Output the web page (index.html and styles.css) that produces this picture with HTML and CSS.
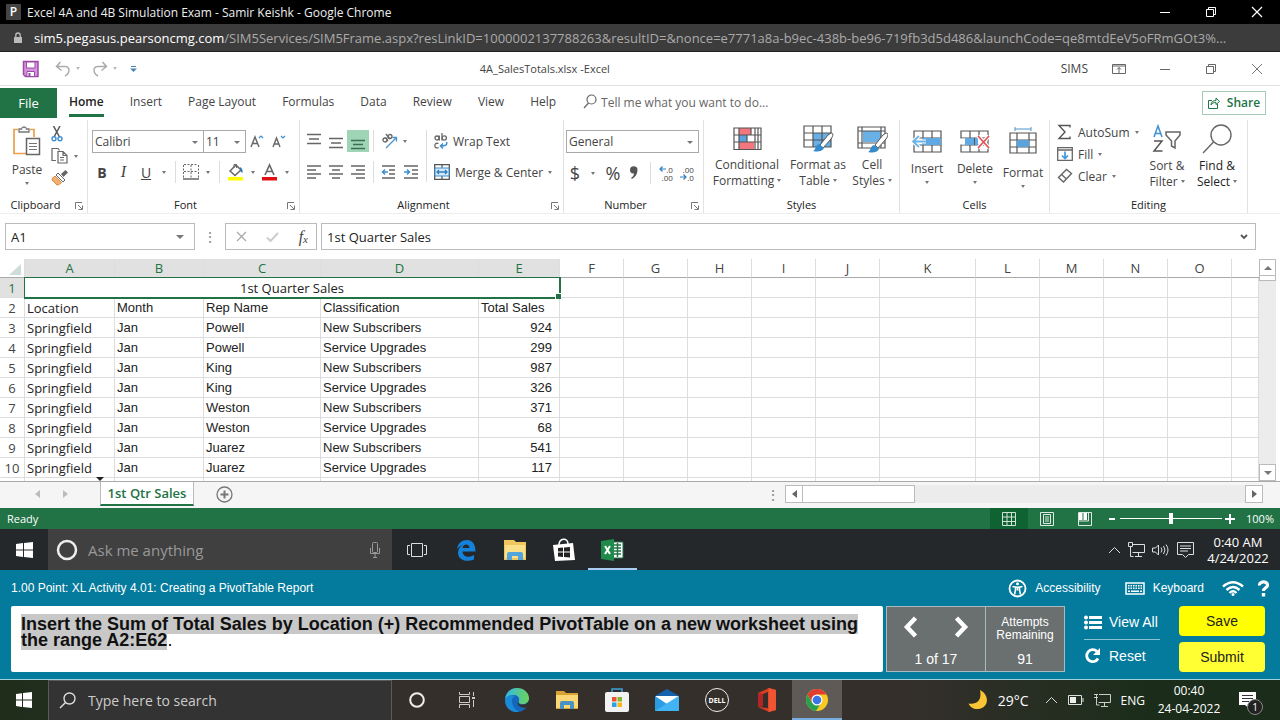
FILE: index.html
```html
<!DOCTYPE html>
<html lang="en">
<head>
<meta charset="utf-8">
<title>Excel 4A and 4B Simulation Exam</title>
<link rel="stylesheet" href="styles.css">
</head>
<body>
<header class="titlebar">
  <span class="favicon">P</span>
  <span class="window-title">Excel 4A and 4B Simulation Exam - Samir Keishk - Google Chrome</span>
  <button class="winbtn" aria-label="Minimize"><svg width="12" height="12"><path d="M1 6.500h10" stroke="#fff" fill="none"/></svg></button>
  <button class="winbtn" aria-label="Restore"><svg width="12" height="12" fill="none" stroke="#fff"><path d="M1.500 3.500h7v7h-7zM3.500 3.500v-2h7v7h-2"/></svg></button>
  <button class="winbtn" aria-label="Close"><svg width="12" height="12" stroke="#fff" stroke-width="1.200"><path d="M1 1l10 10M11 1L1 11"/></svg></button>
</header>
<div class="urlbar">
  <svg width="8" height="12" viewBox="0 0 8 12"><path d="M0 5h8v6H0z" fill="#bbb"/><path d="M1.800 5V3.200a2.200 2.200 0 014.400 0V5" fill="none" stroke="#bbb" stroke-width="1.300"/></svg>
  <span class="url"><b>sim5.pegasus.pearsoncmg.com</b>/SIM5Services/SIM5Frame.aspx?resLinkID=1000002137788263&amp;resultID=&amp;nonce=e7771a8a-b9ec-438b-be96-719fb3d5d486&amp;launchCode=qe8mtdEeV5oFRmGOt3%...</span>
</div>

<div class="qat">
  <button aria-label="Save file"><svg width="18" height="18" viewBox="0 0 18 18"><path d="M1.500 1.500h14.500v15H3.500l-2-2z" fill="#d494dc" stroke="#9b4aa6" stroke-width="1.500"/><path d="M4.500 2h8.500v6H4.500z" fill="#fff" stroke="#9b4aa6"/><path d="M5 11.500h7.500v5H5z" fill="#fff" stroke="#9b4aa6"/><path d="M6.500 13h2v3.500h-2z" fill="#9b4aa6"/></svg></button>
  <button class="undo" aria-label="Undo"><svg width="16" height="16" fill="none" stroke="#aaa" stroke-width="1.500"><path d="M5.500 1L1.500 5.500l5 4M1.500 5.500H10c3.500 0 5 3 3.500 6-.6 1.400-2 2.700-3.500 3.500"/></svg><i class="caret pale"></i></button>
  <button class="redo" aria-label="Redo"><svg width="16" height="16" fill="none" stroke="#aaa" stroke-width="1.500"><path d="M10.500 1l4 4.500-5 4M14.500 5.500H6c-3.500 0-5 3-3.500 6 .6 1.400 2 2.700 3.500 3.500"/></svg><i class="caret pale"></i></button>
  <button class="more" aria-label="Customize"><svg width="7" height="8"><path d="M1 1.500h5" stroke="#4a83b5"/><path d="M0 3.500h7L3.500 7z" fill="#4a83b5"/></svg></button>
  <span class="doc-title">4A_SalesTotals.xlsx -Excel</span>
  <span class="sims">SIMS</span>
  <button class="appbtn" aria-label="Ribbon options"><svg width="14" height="12" fill="none" stroke="#666"><path d="M.500 1.500h13v9H.500zM.500 3h13M7 10V4.500M5 6.500l2-2 2 2"/></svg></button>
  <button class="appbtn" aria-label="Minimize"><svg width="12" height="12"><path d="M1 6.500h10" stroke="#666"/></svg></button>
  <button class="appbtn" aria-label="Restore"><svg width="12" height="12" fill="none" stroke="#666"><path d="M1.500 3.500h7v7h-7zM3.500 3.500v-2h7v7h-2"/></svg></button>
  <button class="appbtn" aria-label="Close"><svg width="12" height="12" stroke="#777"><path d="M1 1l10 10M11 1L1 11"/></svg></button>
</div>

<nav class="tabs">
  <button class="file">File</button>
  <div class="tablist">
    <button class="active">Home</button><button>Insert</button><button>Page Layout</button><button>Formulas</button><button>Data</button><button>Review</button><button>View</button><button>Help</button>
  </div>
  <label class="tellme"><svg width="14" height="15" fill="none" stroke="#666" stroke-width="1.200"><circle cx="8.500" cy="5.500" r="4.500"/><path d="M5.500 9L1 14"/></svg><input type="text" aria-label="Tell me" placeholder="Tell me what you want to do..."></label>
  <button class="share"><svg width="12" height="12" fill="none" stroke="#217346"><path d="M4 3.500H.500v8h9V7M3 8c0-3 2-4.500 5-4.500V1l3.500 3.500L8 7.500V5.500c-2.500 0-4 .500-5 2.500z"/></svg>Share</button>
</nav>

<section class="ribbon">
  <div class="group clipboard">
    <div class="body">
      <button class="big paste"><svg width="28" height="31" viewBox="0 0 28 31" fill="none"><path d="M5 3.500H1v24h12M17 3.500h4V11" stroke="#eba04b" stroke-width="1.700"/><path d="M6 6V3h2.500c.5-2.700 4.500-2.700 5 0H16v3z" stroke="#777" stroke-width="1.300" fill="#fff"/><path d="M13.500 12.500h13v16h-13z" stroke="#666" stroke-width="1.500" fill="#fff"/><path d="M16 17.500h8M16 20.500h8M16 23.500h8" stroke="#777"/></svg><span>Paste</span><i class="caret"></i></button>
      <div class="stack">
        <button aria-label="Cut"><svg width="12" height="16" fill="none"><path d="M2.500 0l6 11M9 0L3 11" stroke="#555" stroke-width="1.500"/><circle cx="3" cy="12.800" r="2" stroke="#3d8fd1" stroke-width="1.400"/><circle cx="9" cy="12.800" r="2" stroke="#3d8fd1" stroke-width="1.400"/></svg></button>
        <button aria-label="Copy"><svg width="17" height="16" fill="none" stroke="#666" stroke-width="1.200"><path d="M5 12.500H1v-12h6l1.500 2M7 3.500h5l4 4v7.500H7zM12 3.500v4h4M9 9.500h4M9 12h4"/></svg><i class="caret"></i></button>
        <button aria-label="Format Painter"><svg width="17" height="16"><path d="M10 4l4.500-4L17 2.500 12.500 7z" fill="#666"/><path d="M7 3l7 7-2 2-7-7z" fill="#fff" stroke="#666"/><path d="M4 6l6.500 6.500C9 14 8 15 6 15L1 10c0-1.500 1.500-3 3-4z" fill="#f0b070" stroke="#d98a3d"/></svg></button>
      </div>
    </div>
    <div class="caption">Clipboard<svg class="launch" width="8" height="8"><path d="M.500 7V.500H7M3 3l4 4M7.500 3.500v4h-4" fill="none" stroke="#777"/></svg></div>
  </div>

  <div class="group font">
    <div class="body col">
      <div class="row">
        <label class="sel fname"><select aria-label="Font"><option>Calibri</option></select></label><label class="sel fsize"><select aria-label="Font size"><option>11</option></select></label>
        <button class="grow" aria-label="Grow font"><svg width="14" height="16" fill="none"><path d="M1 13L5 3l4 10M2.500 9.500h5" stroke="#666" stroke-width="1.400"/><path d="M9 4l2-2 2 2" stroke="#3d8fd1" stroke-width="1.200"/></svg></button>
        <button class="grow" aria-label="Shrink font"><svg width="14" height="16" fill="none"><path d="M1 13l3.500-9L8 13M2.500 10h4" stroke="#666" stroke-width="1.400"/><path d="M9 2l2 2 2-2" stroke="#3d8fd1" stroke-width="1.200"/></svg></button>
      </div>
      <div class="fontrow">
        <button class="bold">B</button><button class="ital">I</button><button class="undl">U</button><i class="caret"></i><i class="sep"></i>
        <button aria-label="Borders"><svg width="16" height="16" fill="none" stroke="#666"><path d="M1 .500h14M.500 1v14M15.500 1v14M8 1v14M1 7.500h14" stroke-dasharray="2 1.500"/><path d="M0 15h16" stroke-width="1.500"/></svg></button><i class="caret"></i><i class="sep"></i>
        <button aria-label="Fill color"><svg width="17" height="18"><path d="M3 8l6-6 5 5-6 5.500z" fill="none" stroke="#666" stroke-width="1.500"/><path d="M7 5V1.500h2.500V5" fill="none" stroke="#666"/><path d="M13 4c2 1 3 3 2.500 6L13 8z" fill="#3477ae"/><path d="M1 14h15v3.500H1z" fill="#fdfd00"/></svg></button><i class="caret"></i>
        <button aria-label="Font color"><svg width="17" height="18"><path d="M4 12L8.500 2 13 12M5.500 8.500h6" fill="none" stroke="#666" stroke-width="1.600"/><path d="M1 14h15v3.500H1z" fill="#e01010"/></svg></button><i class="caret"></i>
      </div>
    </div>
    <div class="caption">Font<svg class="launch" width="8" height="8"><path d="M.500 7V.500H7M3 3l4 4M7.500 3.500v4h-4" fill="none" stroke="#777"/></svg></div>
  </div>

  <div class="group align">
    <div class="body">
      <div class="aligngrid">
        <button aria-label="Top align"><svg width="16" height="20" stroke="#666" stroke-width="1.400"><path d="M1 3.500h14M3 8h10M1 12.500h14"/></svg></button>
        <button aria-label="Middle align"><svg width="16" height="20" stroke="#666" stroke-width="1.400"><path d="M1 7.500h14M3 12h10M1 16.500h14"/></svg></button>
        <button class="on" aria-label="Bottom align"><svg width="16" height="20" stroke="#3f6c53" stroke-width="1.400"><path d="M1 9.500h14M3 13.500h10M1 17.500h14"/></svg></button>
        <i class="sep"></i>
        <button aria-label="Orientation"><svg width="17" height="16" fill="none"><circle cx="4" cy="7" r="2" stroke="#666" stroke-width="1.300"/><path d="M4.500 4.500l2.500 3.500M5 1l4 5" stroke="#666" stroke-width="1.300"/><circle cx="9" cy="3.500" r="2" stroke="#666" stroke-width="1.300"/><path d="M5 15L15.500 4.500M11.500 4.500h4v4" stroke="#4a94cf" stroke-width="1.300"/></svg></button>
        <i class="caret"></i>
        <button aria-label="Align left"><svg width="16" height="16" stroke="#666" stroke-width="1.400"><path d="M1 2h14M1 6h9M1 10h14M1 14h9"/></svg></button>
        <button aria-label="Center"><svg width="16" height="16" stroke="#666" stroke-width="1.400"><path d="M1 2h14M4 6h8M1 10h14M4 14h8"/></svg></button>
        <button aria-label="Align right"><svg width="16" height="16" stroke="#666" stroke-width="1.400"><path d="M1 2h14M6 6h9M1 10h14M6 14h9"/></svg></button>
        <i class="sep"></i>
        <button aria-label="Decrease indent"><svg width="16" height="16" fill="none"><path d="M1 2h13M8 6h6M8 10h6M1 14h13" stroke="#666" stroke-width="1.300"/><path d="M7 8H2M4 5.500L1.500 8 4 10.500" stroke="#3d8fd1" stroke-width="1.500"/></svg></button>
        <button aria-label="Increase indent"><svg width="16" height="16" fill="none"><path d="M1 2h14M9 6h6M9 10h6M1 14h14" stroke="#666" stroke-width="1.300"/><path d="M1 8h5M4 5.500L6.500 8 4 10.500" stroke="#3d8fd1" stroke-width="1.500"/></svg></button>
      </div>
      <i class="sep tall"></i>
      <div class="wraps">
        <button><svg width="14" height="16" fill="none" stroke="#666" stroke-width="1.300"><circle cx="3" cy="5" r="2"/><path d="M5.300 2.500V7.500M8 0v7.500"/><circle cx="10.300" cy="5" r="2.100"/><path d="M4.500 10.500c-3-1-4 1-3.500 3 .5 1.500 2 1.800 3.500 1"/><path d="M12.500 9c1 3-1 4-5.500 4M9 10.500L6.500 13 9 15.500" stroke="#3d8fd1" stroke-width="1.500"/></svg>Wrap Text</button>
        <button><svg width="16" height="16" fill="none"><path d="M.700.700h14.600v14.600H.700zM8 .700v3M8 12v3" stroke="#555" stroke-width="1.300"/><path d="M1 4h14v8H1z" fill="#d5e9f7" stroke="#3d8fd1"/><path d="M3 8h10M5 6L3 8l2 2M11 6l2 2-2 2" stroke="#2d7fc1" stroke-width="1.300"/></svg>Merge &amp; Center<i class="caret"></i></button>
      </div>
    </div>
    <div class="caption">Alignment<svg class="launch" width="8" height="8"><path d="M.500 7V.500H7M3 3l4 4M7.500 3.500v4h-4" fill="none" stroke="#777"/></svg></div>
  </div>

  <div class="group number">
    <div class="body col">
      <label class="sel"><select aria-label="Number format"><option>General</option></select></label>
      <div class="numrow">
        <button class="sym">$</button><i class="caret"></i><button class="sym">%</button><button aria-label="Comma style"><svg width="10" height="14"><path d="M1 4a3.700 3.700 0 017.500 0c0 4-2 7-5.500 9l-1-1c2-1.300 3-3 3-4.500C2.500 8 1 6.500 1 4z" fill="#555"/></svg></button><i class="sep"></i>
        <button class="dec"><span><svg width="7" height="6"><path d="M7 3H1M3.500.500L1 3l2.500 2.500" fill="none" stroke="#2d7fc1" stroke-width="1.200"/></svg>.0</span><span>.00</span></button>
        <button class="dec"><span>.00</span><span><svg width="7" height="6"><path d="M0 3h6M3.500.500L6 3 3.500 5.500" fill="none" stroke="#2d7fc1" stroke-width="1.200"/></svg>.0</span></button>
      </div>
    </div>
    <div class="caption">Number<svg class="launch" width="8" height="8"><path d="M.500 7V.500H7M3 3l4 4M7.500 3.500v4h-4" fill="none" stroke="#777"/></svg></div>
  </div>

  <div class="group styles">
    <div class="body">
      <button class="big two"><svg width="29" height="24" viewBox="0 0 29 24"><path d="M6 1h12v7H6zM6 15h15v7H6z" fill="#f4777f"/><path d="M6 8h8v7H6z" fill="#5ba3dc"/><path d="M1 1h27v21.500H1zM1 8h27M1 15h27M6 1v21M22 1v21M18 1v7M14 8v7M25 1v21" fill="none" stroke="#555" stroke-width="1.200"/></svg><span>Conditional<br>Formatting<i class="caret"></i></span></button>
      <button class="big two"><svg width="31" height="28" viewBox="0 0 31 28"><path d="M10 8h18v14H10z" fill="#69b0e6"/><path d="M1 1h27v21H1zM1 8h27M1 15h27M10 1v21M19 1v21" fill="none" stroke="#555" stroke-width="1.200"/><path d="M28 8c3 0 2 3 0 6l-8 9-3-3 8-10z" fill="#fff" stroke="#555"/><path d="M16 19l5 4c-2 4-7 4-11 3 3-1 2-6 6-7z" fill="#368bcc"/></svg><span>Format as<br>Table<i class="caret"></i></span></button>
      <button class="big two"><svg width="31" height="28" viewBox="0 0 31 28"><path d="M6 6h18v11H6z" fill="#69b0e6"/><path d="M1 2h27v21H1zM1 6h27M1 18h27M5 2v21M24 2v21" fill="none" stroke="#555" stroke-width="1.200"/><path d="M29 8c3 0 2 3 0 6l-8 9-3-3 8-10z" fill="#fff" stroke="#555"/><path d="M17 20l5 4c-2 4-7 4-11 3 3-1 2-6 6-7z" fill="#368bcc"/></svg><span>Cell<br>Styles<i class="caret"></i></span></button>
    </div>
    <div class="caption">Styles</div>
  </div>

  <div class="group cells">
    <div class="body">
      <button class="big"><svg width="30" height="24" viewBox="0 0 30 24"><path d="M2 1h27v21H2zM11 1v21M20 1v21M2 8h27M2 15h27" fill="none" stroke="#555" stroke-width="1.200"/><path d="M10 8h19v7H10z" fill="#60a9e2"/><path d="M14 11.500H1M7 6l-6 5.500L7 17" fill="none" stroke="#fff" stroke-width="4"/><path d="M14 11.500H1M7 6l-6 5.500L7 17" fill="none" stroke="#6ab4e8" stroke-width="1.800"/></svg><span>Insert</span><i class="caret"></i></button>
      <button class="big"><svg width="30" height="24" viewBox="0 0 30 24"><path d="M1 1h27v21H1zM10 1v7M19 1v7M10 15v7M19 15v7M1 8h27M1 15h27" fill="none" stroke="#555" stroke-width="1.200"/><path d="M0 8.500h5v6H0z" fill="#fff"/><path d="M5 8h13v7H5z" fill="#60a9e2"/><path d="M14.500 8v7" stroke="#555"/><path d="M18 6l11 12M29 6L18 18" stroke="#fff" stroke-width="4"/><path d="M18 6l11 12M29 6L18 18" stroke="#e2545c" stroke-width="1.800"/></svg><span>Delete</span><i class="caret"></i></button>
      <button class="big low"><svg width="28" height="28" viewBox="0 0 28 28"><path d="M6 2h16M6 0v4M22 0v4" stroke="#4a94cf" fill="none"/><path d="M1 6h26v20H1zM1 13h26M1 20h26M8 6v20M20 6v20" fill="none" stroke="#555" stroke-width="1.200"/><path d="M8 13h12v7H8z" fill="#5ba3dc"/></svg><span>Format</span><i class="caret"></i></button>
    </div>
    <div class="caption">Cells</div>
  </div>

  <div class="group editing">
    <div class="body">
      <div class="stack">
        <button><svg width="16" height="16" fill="none" stroke="#555" stroke-width="1.400"><path d="M13 3.500V1.500H2l6 6.500-6 6.500h11v-2"/></svg>AutoSum<i class="caret"></i></button>
        <button><svg width="16" height="16" fill="none"><path d="M.700 1.700h14.600v12.600H.700zM.700 4h14.600" stroke="#666" stroke-width="1.300"/><path d="M8 5.500v7M5 9.500l3 3 3-3" stroke="#3d9be0" stroke-width="1.700"/></svg>Fill<i class="caret"></i></button>
        <button><svg width="16" height="16" fill="none" stroke="#666" stroke-width="1.400"><path d="M1.500 9.500L9.500 1.500l5 4-8 8.500zM4.500 6.500l5 4.500"/></svg>Clear<i class="caret"></i></button>
      </div>
      <button class="big two"><svg width="30" height="28" viewBox="0 0 30 28" fill="none"><path d="M2 12L6 1l4 11M3.500 8.500h5" stroke="#3d8fd1" stroke-width="1.500"/><path d="M2 16h8L2 26h8.500" stroke="#555" stroke-width="1.500"/><path d="M14 7h14v3l-5 6v7l-3.500-2v-5L14 10z" stroke="#666" stroke-width="1.500"/></svg><span>Sort &amp;<br>Filter<i class="caret"></i></span></button>
      <button class="big two dark"><svg width="30" height="30" viewBox="0 0 30 30" fill="none" stroke="#666" stroke-width="1.400"><circle cx="19" cy="11" r="10"/><path d="M11.500 18L1 29"/></svg><span>Find &amp;<br>Select<i class="caret"></i></span></button>
    </div>
    <div class="caption">Editing</div>
  </div>
</section>

<div class="formulabar">
  <label class="namebox"><input type="text" aria-label="Name box" value="A1"><i class="caret wide"></i></label>
  <span class="dots">⋮</span>
  <div class="fxbox">
    <button aria-label="Cancel"><svg width="11" height="11" stroke="#aaa" stroke-width="1.300"><path d="M1 1l9 9M10 1L1 10"/></svg></button>
    <button aria-label="Enter"><svg width="13" height="10"><path d="M1 5.500L4.500 9 12 1" fill="none" stroke="#ccc" stroke-width="2"/></svg></button>
    <button class="fx">f<small>x</small></button>
  </div>
  <label class="formula"><input type="text" aria-label="Formula" value="1st Quarter Sales"><svg width="8" height="6"><path d="M1 1l3 3 3-3" fill="none" stroke="#555" stroke-width="1.800"/></svg></label>
</div>

<main class="sheet">
  <div class="gridwrap">
    <table>
      <colgroup><col class="c-n"><col class="c-a"><col class="c-b"><col class="c-c"><col class="c-d"><col class="c-e"><col class="c-s"><col class="c-s"><col class="c-s"><col class="c-s"><col class="c-s"><col class="c-k"><col class="c-s"><col class="c-s"><col class="c-s"><col class="c-s"><col></colgroup>
      <thead><tr><th class="corner"><svg width="12" height="11"><path d="M12 0v11H0z" fill="#cfdcd9"/></svg></th><th class="hot">A</th><th class="hot">B</th><th class="hot">C</th><th class="hot">D</th><th class="hot">E</th><th>F</th><th>G</th><th>H</th><th>I</th><th>J</th><th>K</th><th>L</th><th>M</th><th>N</th><th>O</th><th></th></tr></thead>
      <tbody>
      <tr><th class="hot">1</th><td colspan="5" class="selected">1st Quarter Sales</td><td></td><td></td><td></td><td></td><td></td><td></td><td></td><td></td><td></td><td></td><td></td></tr>
      <tr><th>2</th><td>Location</td><td>Month</td><td>Rep Name</td><td>Classification</td><td>Total Sales</td><td></td><td></td><td></td><td></td><td></td><td></td><td></td><td></td><td></td><td></td><td></td></tr>
      <tr><th>3</th><td>Springfield</td><td>Jan</td><td>Powell</td><td>New Subscribers</td><td class="n">924</td><td></td><td></td><td></td><td></td><td></td><td></td><td></td><td></td><td></td><td></td><td></td></tr>
      <tr><th>4</th><td>Springfield</td><td>Jan</td><td>Powell</td><td>Service Upgrades</td><td class="n">299</td><td></td><td></td><td></td><td></td><td></td><td></td><td></td><td></td><td></td><td></td><td></td></tr>
      <tr><th>5</th><td>Springfield</td><td>Jan</td><td>King</td><td>New Subscribers</td><td class="n">987</td><td></td><td></td><td></td><td></td><td></td><td></td><td></td><td></td><td></td><td></td><td></td></tr>
      <tr><th>6</th><td>Springfield</td><td>Jan</td><td>King</td><td>Service Upgrades</td><td class="n">326</td><td></td><td></td><td></td><td></td><td></td><td></td><td></td><td></td><td></td><td></td><td></td></tr>
      <tr><th>7</th><td>Springfield</td><td>Jan</td><td>Weston</td><td>New Subscribers</td><td class="n">371</td><td></td><td></td><td></td><td></td><td></td><td></td><td></td><td></td><td></td><td></td><td></td></tr>
      <tr><th>8</th><td>Springfield</td><td>Jan</td><td>Weston</td><td>Service Upgrades</td><td class="n">68</td><td></td><td></td><td></td><td></td><td></td><td></td><td></td><td></td><td></td><td></td><td></td></tr>
      <tr><th>9</th><td>Springfield</td><td>Jan</td><td>Juarez</td><td>New Subscribers</td><td class="n">541</td><td></td><td></td><td></td><td></td><td></td><td></td><td></td><td></td><td></td><td></td><td></td></tr>
      <tr><th>10</th><td>Springfield</td><td>Jan</td><td>Juarez</td><td>Service Upgrades</td><td class="n">117</td><td></td><td></td><td></td><td></td><td></td><td></td><td></td><td></td><td></td><td></td><td></td></tr>
      <tr class="stub"><th></th><td></td><td></td><td></td><td></td><td></td><td></td><td></td><td></td><td></td><td></td><td></td><td></td><td></td><td></td><td></td><td></td></tr>
      </tbody>
    </table>
  </div>
  <div class="vscroll"><button aria-label="Scroll up"><i class="caret wide up"></i></button><span class="thumb"></span><span class="track"></span><button aria-label="Scroll down"><i class="caret wide"></i></button></div>
</main>

<div class="sheetbar">
  <button class="nav" aria-label="Previous sheet"><i class="tri left pale"></i></button>
  <button class="nav" aria-label="Next sheet"><i class="tri right pale"></i></button>
  <button class="sheettab">1st Qtr Sales</button>
  <button class="add" aria-label="New sheet"><svg width="17" height="17" fill="none" stroke="#777"><circle cx="8.500" cy="8.500" r="7.500" stroke-width="1.300"/><path d="M8.500 4.500v8M4.500 8.500h8" stroke-width="2"/></svg></button>
  <span class="dots">⋮</span>
  <div class="hscroll"><button aria-label="Scroll left"><i class="tri left"></i></button><span class="thumb"></span><span class="track"></span><button aria-label="Scroll right"><i class="tri right"></i></button></div>
</div>

<div class="status">
  <span class="ready">Ready</span>
  <button class="on" aria-label="Normal view"><svg width="14" height="14" fill="none" stroke="#cfe3d7"><path d="M.500.500h13v13H.500zM5 .500v13M9.500.500v13M.500 5h13M.500 9.500h13"/></svg></button>
  <button aria-label="Page layout view"><svg width="14" height="14" fill="none" stroke="#dfe9e3"><path d="M.500.500h13v13H.500zM3.500 2.500h7v9h-7zM5 5h4M5 7h4M5 9h4"/></svg></button>
  <button aria-label="Page break view"><svg width="14" height="14"><path d="M.500.500h13v13H.500z" fill="none" stroke="#dfe9e3"/><path d="M1 1h3.500v7H1zM5.500 1H9v7H5.500z" fill="#fff"/><path d="M10.500 1v8H1" fill="none" stroke="#dfe9e3"/></svg></button>
  <button class="zoom" aria-label="Zoom out"><svg width="8" height="10"><path d="M1 5h6" stroke="#fff" stroke-width="2"/></svg></button>
  <input type="range" aria-label="Zoom" min="0" max="100" value="50">
  <button class="zoom" aria-label="Zoom in"><svg width="10" height="10"><path d="M5 0v10M0 5h10" stroke="#fff" stroke-width="2"/></svg></button>
  <span class="pct">100%</span>
</div>

<div class="taskbar inner">
  <button class="start" aria-label="Start"><svg width="17" height="16" fill="#fff"><path d="M0 2l7-1v6.500H0zM8 .900L17 0v7.500H8zM0 8.500h7V15l-7-1zM8 8.500h9V16l-9-1z"/></svg></button>
  <label class="search"><svg width="22" height="22"><circle cx="11" cy="11" r="9" fill="none" stroke="#eee" stroke-width="2.500"/></svg><input type="text" aria-label="Ask" placeholder="Ask me anything"><svg width="10" height="16" fill="none" stroke="#999"><rect x="2.500" y=".500" width="5" height="10" rx="1"/><path d="M.500 6v5.500h9V6M5 11.500V15M3 15.500h4"/></svg></label>
  <div class="apps">
    <button aria-label="Task view"><svg width="20" height="16" fill="none" stroke="#ddd"><path d="M4.500 1.500h11v13h-11zM3 3.500H.500v9H3M17 3.500h2.500v9H17"/></svg></button>
    <button aria-label="Edge"><svg width="20" height="22"><path d="M1 10C2 4 6 1 11 1c6 0 8.500 5 8.500 11.500H6.500c.5 6 7 6.500 11.500 3.500v4.500C9 24 2 20 2 14c0-4 2-6.500 5-8-2 .5-4.500 2-6 4zm5.500-1h7c0-4.500-6-5-7 0z" fill="#1482da"/></svg></button>
    <button aria-label="File Explorer"><svg width="22" height="20"><path d="M0 0h10l2 2h10v18H0z" fill="#f0c75e"/><path d="M1 5h20v13H1z" fill="#fbe08a"/><path d="M3 20v-6q0-2 2-2h12q2 0 2 2v6h-5v-4H8v4z" fill="#50a6dc"/></svg></button>
    <button aria-label="Store"><svg width="22" height="24"><path d="M0 7l20-2 2 17-20 1z" fill="#fff"/><path d="M6 7c0-7 9-8 9-1" fill="none" stroke="#fff" stroke-width="1.500"/><path d="M5 10l5-.500v4H5zM11 9.400l6-.500v4.600h-6zM5 14.500h5V19l-5-.500zM11 14.500h6v5l-6-.500z" fill="#222"/></svg></button>
    <button class="running" aria-label="Excel"><svg width="23" height="22"><path d="M10 3h12v16H10z" fill="#fff" stroke="#217346"/><path d="M13 6h7M13 9h7M13 12h7M13 15h7M16.500 4v14" stroke="#217346" stroke-width="1.500"/><path d="M0 2l13-2v22L0 20z" fill="#1e8a4c"/><path d="M4 7l5 8M9 7l-5 8" stroke="#fff" stroke-width="2"/></svg></button>
  </div>
  <div class="tray">
    <svg width="13" height="8"><path d="M1 7l5.500-5.500L12 7" fill="none" stroke="#ddd"/></svg>
    <svg width="17" height="16" fill="none" stroke="#ddd"><path d="M5 2.500h11.500v8H4.500M.500.500h4v4h-4zM2.500 4.500v10h3M10.500 10.500V14M7 14.500h7"/></svg>
    <svg width="18" height="14" fill="none" stroke="#ddd"><path d="M.500 5h3l3-3v10l-3-3h-3zM9 4.500q2 2.500 0 5M11.500 3q3 4 0 8M14 1.500q4 5.500 0 11"/></svg>
    <svg width="17" height="16" fill="none" stroke="#ddd"><path d="M.500.500h16v12h-5L8.500 15.500l-3-3h-5zM3 4h11M3 6.500h11M3 9h8"/></svg>
    <div class="clock">0:40 AM<br>4/24/2022</div>
  </div>
</div>

<section class="sim">
  <div class="simhead">
    <span class="task-title">1.00 Point: XL Activity 4.01: Creating a PivotTable Report</span>
    <button><svg width="19" height="19" fill="none" stroke="#fff"><circle cx="9.500" cy="9.500" r="8" stroke-width="1.800"/><circle cx="9.500" cy="4.800" r="1.500" fill="#fff" stroke="none"/><path d="M4.500 7.500q5 1.500 10 0M9.500 8v3.500M7.500 8v3l-1 4.500M11.500 8v3l1 4.500" stroke-width="1.600"/></svg>Accessibility</button>
    <button class="kb"><svg width="20" height="13"><path d="M1 1h18v11H1z" fill="none" stroke="#fff" stroke-width="1.500"/><path d="M3 3.800h14M3 6.300h14" stroke="#fff" stroke-width="1.500" stroke-dasharray="1.500 1"/><path d="M3 9.300h2M6 9.300h8M15 9.300h2" stroke="#fff" stroke-width="1.500"/></svg>Keyboard</button>
    <svg width="22" height="17" fill="none" stroke="#fff" stroke-width="2.400"><path d="M1 6.500Q11-2 21 6.500M4.500 10Q11 4 17.500 10M7.500 13Q11 9.500 14.500 13"/><circle cx="11" cy="14.500" r="1.500" fill="#fff" stroke="none"/></svg>
    <button class="help" aria-label="Help"><svg width="11" height="17"><path d="M1.500 5.500C1 1 9.500.500 9.500 5c0 3-4 2.500-4 6" fill="none" stroke="#fff" stroke-width="3.200"/><path d="M3.800 13h3.400v3.500H3.800z" fill="#fff"/></svg></button>
  </div>
  <div class="simbody">
    <p class="instruction"><span>Insert the Sum of Total Sales by Location (+) Recommended PivotTable on a new worksheet using the range A2:E62</span>.</p>
    <div class="counter">
      <div class="pager">
        <div class="arrows"><button aria-label="Previous"><svg width="15" height="22"><path d="M12.500 2L4 11l8.500 9" fill="none" stroke="#fff" stroke-width="4.500"/></svg></button><button aria-label="Next"><svg width="15" height="22"><path d="M2.500 2L11 11l-8.500 9" fill="none" stroke="#fff" stroke-width="4.500"/></svg></button></div>
        <span class="num">1 of 17</span>
      </div>
      <div class="attempts"><span>Attempts<br>Remaining</span><span class="num">91</span></div>
    </div>
    <div class="links">
      <button><svg width="18" height="15" fill="#fff"><path d="M5 1h13v3H5zM5 6h13v3H5zM5 11h13v3H5z"/><circle cx="2" cy="2.500" r="2"/><circle cx="2" cy="7.500" r="2"/><circle cx="2" cy="12.500" r="2"/></svg>View All</button>
      <button><svg width="18" height="17"><path d="M13 4.500A6 6 0 1014 11.500" fill="none" stroke="#fff" stroke-width="2.800"/><path d="M16 1v7H9z" fill="#fff"/></svg>Reset</button>
    </div>
    <div class="actions"><button>Save</button><button class="lite">Submit</button></div>
  </div>
</section>

<footer class="taskbar outer">
  <button class="start" aria-label="Start"><svg width="16" height="16" fill="#fff"><path d="M0 2l6-.800v6.300H0zM7 1l9-1v7.500H7zM0 8.500h6V15l-6-1zM7 8.500h9V16l-9-1z"/></svg></button>
  <label class="search"><svg width="17" height="17" fill="none" stroke="#ddd" stroke-width="1.400"><circle cx="10.500" cy="6.500" r="5.500"/><path d="M6.500 10.500L1 16"/></svg><input type="text" aria-label="Search" placeholder="Type here to search"></label>
  <div class="apps">
    <button aria-label="Cortana"><svg width="18" height="18"><circle cx="9" cy="9" r="6.800" fill="none" stroke="#eee" stroke-width="2"/></svg></button>
    <button aria-label="Task view"><svg width="16" height="16" fill="none" stroke="#ccc"><path d="M.500 0v2.500h10V0M.500 4.500h10v6H.500zM.500 16v-3.500h10V16M14.500 0v4M14.500 8v7"/><path d="M13 5h3v2h-3z" fill="#ccc" stroke="none"/></svg></button>
    <button aria-label="Edge"><svg width="24" height="24"><defs><linearGradient id="eg" x1="0" x2="1"><stop offset="0" stop-color="#36b5e8"/><stop offset="1" stop-color="#6ad55a"/></linearGradient></defs><circle cx="12" cy="12" r="12" fill="#1567bb"/><path d="M0 11C1 4 6 0 12 0c7 0 12 5 12 10 0 4-3 6-6 6-4 0-5-1-4-3 1-4-2-6-5-6-4 0-8 2-9 4z" fill="url(#eg)"/><path d="M13.500 13c-1 3 2 4 5 3.600 2.500-.3 4-1.500 5.500-4.100v3l-1 3.500c-4 2-9 0-10-2.500-.6-1.500-.3-2.500.5-3.500z" fill="#352f2c"/><path d="M0 12c1-4 6-6 10-4-5 2-4 11 4 16C5 25 0 19 0 12z" fill="#1b8bd8"/></svg></button>
    <button aria-label="File Explorer"><svg width="22" height="20"><path d="M0 1h8l2 2h12v16H0z" fill="#d9a334"/><path d="M0 5h22v13H0z" fill="#fbd875"/><path d="M4 19v-6q0-2 2-2h10q2 0 2 2v6h-4v-4H8v4z" fill="#4a91c4"/></svg></button>
    <button aria-label="Store"><svg width="24" height="24"><path d="M7 5V1h10v4" fill="none" stroke="#3aa4dc" stroke-width="1.500"/><rect y="4" width="24" height="20" rx="2" fill="#f2f2f2"/><path d="M7 9h4.500v4.500H7z" fill="#ec5432"/><path d="M12.500 9H17v4.500h-4.500z" fill="#80ba2c"/><path d="M7 14.500h4.500V19H7z" fill="#2ba1e6"/><path d="M12.500 14.500H17V19h-4.500z" fill="#fab619"/></svg></button>
    <button aria-label="Mail"><svg width="24" height="22"><path d="M0 7l12-7 12 7v14H0z" fill="#1762ad"/><path d="M1 7h22v8H1z" fill="#fff"/><path d="M0 7l12 8 12-8v15H0z" fill="#2b9be4"/><path d="M0 22l14-9 10-6v15z" fill="#42b4f4"/></svg></button>
    <button class="dell" aria-label="Dell">DELL</button>
    <button aria-label="Office"><svg width="20" height="24"><path d="M1 5l11-5 7 2v20l-7 2-11-5 10 1V4L6 6v12l-5 1z" fill="#d83b21"/><path d="M11.500 0l7.500 2v20l-7.500 2z" fill="#ef5532"/><path d="M1 5l5 1v12l-5 1z" fill="#b42525"/></svg></button>
    <button class="running" aria-label="Chrome"><svg width="22" height="22" viewBox="0 0 22 22"><circle cx="11" cy="11" r="11" fill="#f9c922"/><path d="M1.500 5.500A11 11 0 0120.500 5.500H11L6.200 13.800z" fill="#e13c30"/><path d="M1.500 5.500A11 11 0 0010 22l5-8-9 0z" fill="#28a04f"/><circle cx="11" cy="11" r="5.500" fill="#fff"/><circle cx="11" cy="11" r="4.300" fill="#3975e4"/></svg></button>
  </div>
  <div class="tray">
    <svg width="20" height="20"><path d="M12 0c10 5 9 18-2 19-4 .5-8-2-9.500-5.500C10 15 14 9 12 0z" fill="#fac534"/></svg>
    <span class="temp">29°C</span>
    <svg width="13" height="8"><path d="M1 7l5.500-5.500L12 7" fill="none" stroke="#ddd"/></svg>
    <svg width="16" height="10"><path d="M.500.500h13v9H.500zM15 3v4" fill="none" stroke="#ddd"/><path d="M2 2h6v6H2z" fill="#eee"/></svg>
    <svg width="17" height="14" fill="none" stroke="#ccc"><path d="M5 1.500h11.500v8H4.500M0 1.500h4M0 4.500h4M2.500 1v11h3M10.500 10v3M7 13.500h7"/></svg>
    <span class="lang">ENG</span>
    <div class="clock">00:40<br>24-04-2022</div>
    <button class="notif" aria-label="Notifications"><svg width="17" height="17"><path d="M0 0h17v13h-6v4l-5-4H0z" fill="#fff"/><path d="M3 3.500h11M3 6.500h11M3 9.500h7" stroke="#333"/></svg><span class="badge">1</span></button>
  </div>
</footer>
</body>
</html>
```
FILE: styles.css
```css
* { box-sizing: border-box; }
body { margin: 0; background: #fff; font-family: "Open Sans", "Noto Sans", sans-serif; font-size: 12px; color: #444; overflow-x: hidden; }
button { border: 0; background: none; padding: 0; margin: 0; font: inherit; color: inherit; display: flex; align-items: center; justify-content: center; }
input, select { border: 0; background: none; padding: 0; margin: 0; font: inherit; color: inherit; outline: 0; min-width: 0; }
select { appearance: none; width: 100%; }
svg { flex: none; display: block; }

.caret { flex: none; display: inline-block; border: 2px solid transparent; border-top: 3px solid #777; border-bottom: 0; }
.caret.wide { border-width: 4px 4px 0; }
.caret.up { transform: rotate(180deg); }
.caret.pale { border-top-color: #bbb; }
.tri { border: 4px solid transparent; }
.tri.left { border-right: 5px solid #666; border-left: 0; }
.tri.right { border-left: 5px solid #666; border-right: 0; }
.tri.left.pale { border-right-color: #bbb; }
.tri.right.pale { border-left-color: #bbb; }
.sep { width: 1px; height: 22px; background: #ddd; }

.titlebar { display: flex; align-items: center; height: 24px; background: #000; color: #eee; padding-left: 6px; }
.favicon { width: 15px; height: 16px; background: #444; color: #fff; font-weight: 600; line-height: 16px; text-align: center; margin-right: 6px; }
.window-title { flex: 1; white-space: nowrap; }
.winbtn { width: 46px; height: 22px; }
.urlbar { display: flex; align-items: center; gap: 12px; height: 28px; padding: 0 14px; background: #3c3c3c; border-bottom: 1px solid #222; color: #aaa; font-size: 13px; }
.url { flex: 1; overflow: hidden; white-space: nowrap; }
.url b { color: #fff; font-weight: 400; }

.qat { display: flex; align-items: center; height: 34px; padding-left: 22px; border-bottom: 1px solid #e2e2e2; }
.undo { gap: 5px; margin-left: 15px; }
.redo { gap: 5px; margin-left: 12px; }
.more { margin-left: 13px; }
.doc-title { flex: 1; text-align: center; padding-right: 108px; font-size: 11px; }
.sims { margin-right: 8px; }
.appbtn { width: 46px; height: 30px; }

.tabs { display: flex; align-items: center; height: 33px; font-size: 12px; }
.file { width: 57px; height: 30px; background: #217346; color: #fff; font-size: 13px; }
.tablist { display: flex; gap: 26px; margin-left: 12px; }
.tablist button { height: 28px; border-bottom: 3px solid transparent; }
.tablist .active { font-weight: 600; color: #222; border-bottom-color: #217346; }
.tellme { display: flex; gap: 4px; flex: 1; margin-left: 27px; }
.tellme input { flex: 1; }
.tellme input::placeholder { color: #666; opacity: 1; }
.share { width: 64px; height: 24px; gap: 7px; border: 1px solid #a5c9b5; color: #217346; font-weight: 600; margin-right: 14px; }

.ribbon { display: flex; height: 95px; padding-top: 1px; border-bottom: 1px solid #eee; }
.group { flex: none; display: flex; flex-direction: column; border-right: 1px solid #e2e2e2; }
.body { flex: 1; display: flex; }
.body.col { flex-direction: column; }
.caption { position: relative; height: 16px; line-height: 16px; text-align: center; font-size: 11px; color: #222; }
.launch { position: absolute; right: 4px; top: 5px; }
.clipboard { width: 88px; }
.font { width: 212px; }
.align { width: 264px; }
.number { width: 140px; }
.clipboard .caption, .font .caption, .align .caption, .number .caption { padding-right: 16px; }
.styles { width: 196px; }
.cells { width: 150px; }
.editing { width: 198px; }

.big { flex-direction: column; justify-content: flex-start; line-height: 16px; }
.big .caret { margin-top: 4px; }
.paste { width: 30px; margin-left: 12px; padding-top: 6px; }
.paste span { padding-top: 5px; }
.clipboard .stack { display: grid; grid-template-rows: 16px 16px 16px; row-gap: 6px; margin: 6px 0 0 9px; }
.clipboard .stack button { justify-content: flex-start; gap: 6px; }

.sel { position: relative; display: block; height: 23px; border: 1px solid #aaa; padding-left: 2px; }
.sel::after { content: ""; position: absolute; right: 5px; top: 10px; border: 3px solid transparent; border-top-color: #777; border-bottom: 0; }
.sel select { height: 21px; }
.font .row { display: flex; align-items: center; padding: 10px 0 0 4px; }
.fname { width: 112px; }
.fsize { width: 42px; border-left: 0; }
.grow { width: 22px; }
.fontrow { display: grid; grid-template-columns: 20px 23px 22px 13px 10px 21px 14px 8px 24px 11px 23px 11px; justify-items: center; align-items: center; height: 22px; margin: 8px 0 0 4px; font-size: 14px; }
.bold { font-weight: 700; }
.ital { font-family: "Liberation Serif", serif; font-style: italic; font-size: 16px; }
.undl { text-decoration: underline; }

.aligngrid { display: grid; grid-template-columns: 22px 22px 22px 9px 22px 22px; grid-template-rows: 22px 22px; row-gap: 9px; justify-items: center; align-items: center; align-content: start; margin: 10px 0 0 3px; }
.aligngrid .on { background: #9fd5b5; height: 22px; width: 22px; }
.aligngrid .caret { justify-self: start; margin-left: 3px; }
.sep.tall { height: 52px; margin: 10px 0 0 4px; }
.wraps { display: grid; grid-template-rows: 22px 22px; row-gap: 9px; align-content: start; margin: 10px 0 0 7px; }
.wraps button { justify-content: flex-start; gap: 5px; white-space: nowrap; }

.number .body { padding: 10px 4px 0 2px; }
.numrow { display: grid; grid-template-columns: 18px 18px 22px 20px 12px 20px 22px; height: 22px; margin-top: 8px; align-items: center; justify-items: center; }
.sym { font-size: 18px; }
.dec { flex-direction: column; font-size: 8px; line-height: 11px; align-items: flex-end; }
.dec span { display: flex; align-items: center; height: 8px; }

.styles .body { padding-left: 8px; }
.styles .big { padding-top: 5px; }
.big.two svg { height: 28px; }
.big.two span { padding-top: 4px; }
.big.two .caret { margin: 0 0 3px 3px; }
.styles .big:nth-child(1) { width: 70px; }
.styles .big:nth-child(2) { width: 72px; }
.styles .big:nth-child(3) { width: 36px; }
.styles .big { white-space: nowrap; }
.cells .body { padding-left: 3px; }
.cells .big { width: 48px; padding-top: 10px; }
.cells .big span { padding-top: 7px; }
.cells .low { padding-top: 7px; }
.cells .low span { padding-top: 10px; }
.editing .stack { width: 92px; display: grid; grid-template-rows: 22px 22px 22px; align-content: start; padding: 1px 0 0 7px; }
.editing .stack button { justify-content: flex-start; gap: 5px; }
.editing .big { width: 50px; padding-top: 4px; }
.editing .big.two svg { height: 30px; }
.dark { color: #222; }

.formulabar { display: flex; align-items: center; height: 45px; padding: 0 24px 0 5px; font-size: 13px; color: #222; }
.namebox { display: flex; align-items: center; width: 190px; height: 27px; border: 1px solid #bbb; padding: 0 10px 0 5px; }
.namebox input { flex: 1; }
.dots { color: #888; width: 30px; text-align: center; font-size: 14px; }
.fxbox { display: flex; align-items: center; justify-content: space-between; width: 92px; height: 27px; border: 1px solid #bbb; padding: 0 8px 0 10px; }
.fx { font-family: "Liberation Serif", serif; font-style: italic; font-size: 16px; color: #444; }
.fx small { font-size: 11px; padding-top: 4px; }
.formula { flex: 1; display: flex; align-items: center; height: 27px; border: 1px solid #bbb; margin-left: 4px; padding: 0 7px 0 5px; }
.formula input { flex: 1; }

.sheet { display: flex; }
.gridwrap { flex: 1; overflow: hidden; }
table { table-layout: fixed; width: 100%; border-collapse: separate; border-spacing: 0; }
.c-n { width: 25px; } .c-a { width: 90px; } .c-b { width: 89px; } .c-c { width: 117px; } .c-d { width: 158px; } .c-e { width: 81px; } .c-s { width: 64px; } .c-k { width: 96px; }
th, td { height: 20px; padding: 0 2px; border-right: 1px solid #ddd; border-bottom: 1px solid #ddd; white-space: nowrap; line-height: 18px; }
th { font-weight: 400; font-size: 13px; color: #444; padding: 0; }
thead th { height: 19px; line-height: 17px; border-bottom-color: #aaa; }
thead th:last-child { border-right: 0; }
.corner svg { margin: 2px 0 0 9px; }
th.hot { background: #e1e1e1; color: #217346; }
td { font: 13px/18px "Liberation Sans", Arial, sans-serif; color: #222; }
td:nth-child(2), td.selected { font-family: "Open Sans", sans-serif; }
td.n { text-align: right; padding-right: 7px; }
td.selected { position: relative; text-align: center; border-color: #217346; box-shadow: 0 0 0 1px #217346; }
.selected::after { content: ""; position: absolute; right: -2px; bottom: -2px; width: 5px; height: 5px; background: #217346; border: 1px solid #fff; border-width: 1px 0 0 1px; }
.stub th, .stub td { height: 3px; border-bottom: 0; line-height: 0; }
.vscroll { width: 17px; margin-right: 4px; display: flex; flex-direction: column; }
.vscroll button { height: 17px; border: 1px solid #bbb; }
.vscroll .thumb { height: 5px; border: 1px solid #bbb; border-top: 0; }
.vscroll .track { flex: 1; background: #ececec; }

.sheetbar { display: flex; align-items: center; height: 27px; border-top: 1px solid #aaa; background: #f5f5f5; padding: 0 17px 2px 23px; }
.nav { width: 28px; height: 20px; }
.sheettab { position: relative; align-self: flex-start; width: 94px; height: 24px; margin-left: 21px; background: #fff; border: 1px solid #bbb; border-top: 0; border-bottom: 2px solid #217346; color: #217346; font-size: 13px; font-weight: 600; }
.sheettab::before { content: ""; position: absolute; left: -5px; top: -5px; border: 4px solid transparent; border-top-color: #222; border-bottom: 0; }
.add { margin-left: 22px; }
.sheetbar .dots { margin-left: auto; width: 24px; }
.hscroll { display: flex; width: 478px; height: 18px; background: #ececec; }
.hscroll button { width: 18px; border: 1px solid #bbb; background: #fff; }
.hscroll .thumb { width: 112px; background: #fff; border: 1px solid #bbb; border-left: 0; }
.hscroll .track { flex: 1; }

.status { display: flex; align-items: center; height: 21px; background: #217346; color: #fff; font-size: 11px; padding: 0 6px 0 7px; }
.ready { flex: 1; }
.status button { width: 38px; height: 21px; }
.status .on { background: #0f6232; }
.status .zoom { width: 16px; }
.status input { appearance: none; width: 102px; height: 12px; background: linear-gradient(#fff, #fff) center / 100% 1px no-repeat; }
.status input::-webkit-slider-thumb { appearance: none; width: 4px; height: 11px; background: #fff; }
.pct { width: 36px; text-align: right; }

.taskbar { display: flex; align-items: stretch; color: #fff; font-size: 12px; }
.start { width: 48px; }
.search { display: flex; align-items: center; width: 344px; font-size: 14px; }
.search input { flex: 1; }
.search input::placeholder { color: inherit; opacity: 1; }
.apps { display: flex; }
.apps button { border-bottom: 2px solid transparent; border-top: 2px solid transparent; }
.tray { display: flex; align-items: center; margin-left: auto; }
.clock { text-align: center; line-height: 16px; }
.inner { height: 41px; background: #25282a; }
.inner .search { background: #404040; color: #999; padding: 0 12px 0 8px; gap: 10px; font-size: 15px; }
.inner .apps button { width: 49px; }
.inner .apps .running { border-bottom-color: #a9cdf0; }
.inner .tray { gap: 7px; padding-right: 10px; }
.inner .clock { width: 64px; margin-left: 5px; font-size: 13px; }

.sim { background: #047a9c; color: #fff; font-family: "Liberation Sans", Arial, sans-serif; padding: 0 15px 7px 11px; border-bottom: 1px solid #9fd0de; }
.simhead { display: flex; align-items: center; height: 36px; gap: 18px; margin-right: -4px; }
.task-title { flex: 1; }
.simhead button { gap: 8px; }
.simhead .kb { margin-left: 6px; }
.simhead .help { margin-left: -4px; }
.simbody { display: flex; }
.instruction { flex: 1; margin: 0; min-height: 66px; padding: 10px; background: #fff; border-radius: 2px; color: #111; font-size: 18px; line-height: 16px; }
.instruction span { font-weight: 700; background: #c8c8c8; }
.counter { display: flex; margin-left: 3px; border: 1px solid #a8bcc0; background: #6a7070; text-align: center; }
.pager { width: 99px; display: flex; flex-direction: column; justify-content: space-between; padding: 9px 0 4px; border-right: 1px solid #a8bcc0; }
.arrows { display: flex; justify-content: space-between; padding: 0 16px; }
.attempts { width: 78px; display: flex; flex-direction: column; justify-content: space-between; padding: 9px 0 4px; line-height: 13px; }
.num { font-size: 14px; line-height: 16px; }
.links { width: 76px; margin-left: 19px; font-size: 14px; display: flex; flex-direction: column; white-space: nowrap; }
.links button { flex: 1; justify-content: flex-start; gap: 7px; }
.links button + button { border-top: 1px solid #8cc3d3; }
.actions { width: 86px; margin-left: 19px; display: flex; flex-direction: column; gap: 6px; }
.actions button { flex: 1; background: #ffff00; color: #222; border-radius: 4px; font-size: 14px; }
.actions .lite { background: #ffff33; }

.outer { height: 40px; background: linear-gradient(90deg, #1f2d1b, #352f2c 30%, #352f2c 70%, #1b2d1a 90%); }
.outer .search { background: #333; border: 1px solid #5a5a5a; border-bottom: 0; color: #ccc; padding-left: 10px; gap: 12px; }
.outer .apps button { width: 50px; }
.outer .apps .running { background: #5e5a57; border-bottom-color: #76aee0; }
.outer .dell { font-size: 7px; font-weight: 700; }
.outer .dell::before { content: ""; position: absolute; width: 22px; height: 22px; border: 1px solid #eee; border-radius: 50%; }
.outer .tray { gap: 10px; padding-right: 24px; }
.temp { font-size: 14px; margin-right: 6px; }
.outer .clock { width: 64px; margin: 0 8px 0 2px; line-height: 18px; }
.notif { position: relative; }
.badge { position: absolute; left: 8px; top: 7px; width: 16px; height: 16px; border: 1px solid #888; border-radius: 50%; background: #222; font-size: 10px; line-height: 14px; text-align: center; }
```
